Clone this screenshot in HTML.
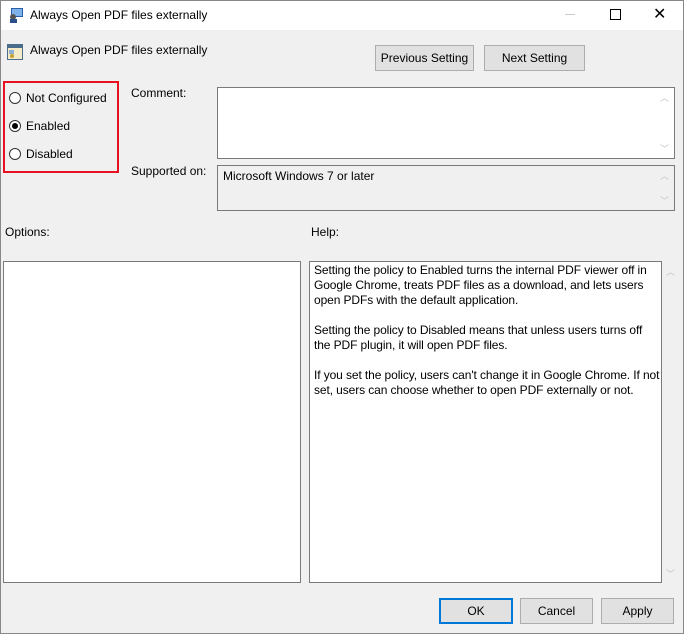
<!DOCTYPE html>
<html><head><style>
body{margin:0;width:684px;height:634px;overflow:hidden;background:#f0f0f0;font-family:"Liberation Sans",sans-serif;font-size:12px;color:#000;position:relative}
.a{position:absolute}
.box{position:absolute;border:1px solid #7a7a7a;background:#fff;box-sizing:border-box}
.btn{position:absolute;border:1px solid #adadad;background:#e1e1e1;box-sizing:border-box;text-align:center;line-height:25px;font-size:12px}
.rad{position:absolute;width:12px;height:12px;border:1px solid #333;border-radius:50%;background:#fff;box-sizing:border-box}
.arr{position:absolute;color:#c0c0c0;font-size:9px}
</style></head><body>
<div class="a" style="left:0;top:0;width:684px;height:30px;background:#fff"></div>
<svg class="a" style="left:8px;top:7px" width="16" height="16"><rect x="3" y="1" width="12" height="9" fill="#2b5ea8"/><rect x="4" y="2" width="10" height="7" fill="#7fb2e8"/><circle cx="5" cy="10" r="3" fill="#555"/><rect x="2" y="12" width="7" height="4" fill="#2b4f8a"/></svg>
<div class="a" style="left:30px;top:8px;font-size:12px">Always Open PDF files externally</div>
<div class="a" style="left:565px;top:14px;width:10px;height:1px;background:#ccc"></div>
<div class="a" style="left:610px;top:9px;width:9px;height:9px;border:1px solid #000"></div>
<div class="a" style="left:653px;top:4px;font-size:16px">✕</div>
<svg class="a" style="left:6px;top:43px" width="18" height="18"><rect x="1" y="1" width="16" height="16" fill="#4a6d8c"/><rect x="2" y="5" width="14" height="11" fill="#f4ecc8"/><rect x="3" y="7" width="5" height="4" fill="#8fb0d0"/><circle cx="6" cy="13" r="2" fill="#c0a030"/></svg>
<div class="a" style="left:30px;top:43px">Always Open PDF files externally</div>
<div class="btn" style="left:375px;top:45px;width:99px;height:26px">Previous Setting</div>
<div class="btn" style="left:484px;top:45px;width:101px;height:26px">Next Setting</div>
<div class="a" style="left:3px;top:81px;width:116px;height:92px;border:2px solid #e81123;box-sizing:border-box"></div>
<div class="rad" style="left:9px;top:92px"></div><div class="a" style="left:26px;top:91px">Not Configured</div>
<div class="rad" style="left:9px;top:120px"></div><div class="a" style="left:12px;top:123px;width:6px;height:6px;border-radius:50%;background:#000"></div><div class="a" style="left:26px;top:119px">Enabled</div>
<div class="rad" style="left:9px;top:148px"></div><div class="a" style="left:26px;top:147px">Disabled</div>
<div class="a" style="left:131px;top:86px">Comment:</div>
<div class="box" style="left:217px;top:87px;width:458px;height:72px"></div>
<div class="arr" style="left:660px;top:91px">︿</div><div class="arr" style="left:660px;top:142px">﹀</div>
<div class="a" style="left:131px;top:164px">Supported on:</div>
<div class="box" style="left:217px;top:165px;width:458px;height:46px;background:#f0f0f0"></div>
<div class="a" style="left:223px;top:169px">Microsoft Windows 7 or later</div>
<div class="arr" style="left:660px;top:169px">︿</div><div class="arr" style="left:660px;top:194px">﹀</div>
<div class="a" style="left:5px;top:225px">Options:</div>
<div class="a" style="left:311px;top:225px">Help:</div>
<div class="box" style="left:3px;top:261px;width:298px;height:322px"></div>
<div class="box" style="left:309px;top:261px;width:353px;height:322px"></div>
<div class="a" style="left:314px;top:263px;width:346px;line-height:15px;letter-spacing:-0.1px">Setting the policy to Enabled turns the internal PDF viewer off in Google Chrome, treats PDF files as a download, and lets users open PDFs with the default application.<br><br>Setting the policy to Disabled means that unless users turns off the PDF plugin, it will open PDF files.<br><br>If you set the policy, users can't change it in Google Chrome. If not set, users can choose whether to open PDF externally or not.</div>
<div class="arr" style="left:666px;top:265px">︿</div><div class="arr" style="left:666px;top:567px">﹀</div>
<div class="btn" style="left:439px;top:598px;width:74px;height:26px;border:2px solid #0078d7;line-height:23px">OK</div>
<div class="btn" style="left:520px;top:598px;width:73px;height:26px">Cancel</div>
<div class="btn" style="left:601px;top:598px;width:73px;height:26px">Apply</div>
<div class="a" style="left:0;top:0;width:684px;height:634px;border:1px solid #888;box-sizing:border-box"></div>
</body></html>
